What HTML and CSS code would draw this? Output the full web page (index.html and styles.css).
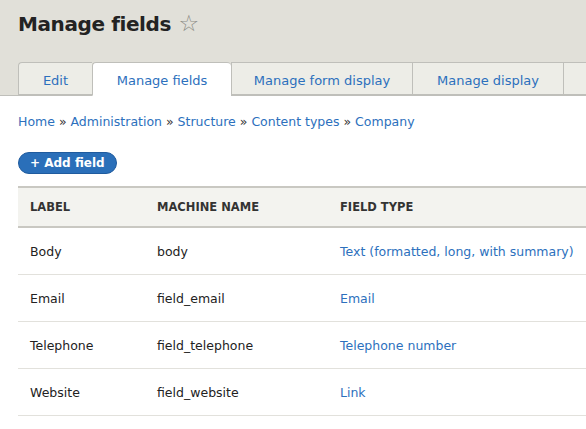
FILE: index.html
```html
<!DOCTYPE html>
<html lang="en">
<head>
  <meta charset="UTF-8" />
  <title>Manage fields</title>
  <link rel="stylesheet" href="styles.css">
</head>
<body>
  <div class="header">
    <h1>Manage fields <span class="star">&#9734;</span></h1>
    <div class="tabs">
      <a class="tab tab-edit">Edit</a>
      <a class="tab tab-fields active">Manage fields</a>
      <a class="tab tab-form">Manage form display</a>
      <a class="tab tab-display">Manage display</a>
      <a class="tab tab-more"></a>
    </div>
  </div>
  <div class="content">
    <div class="breadcrumb">
      <a>Home</a> » <a>Administration</a> » <a>Structure</a> » <a>Content types</a> » <a>Company</a>
    </div>
    <a class="button">+ Add field</a>
    <table class="fields">
      <thead>
        <tr><th class="c-label">Label</th><th class="c-machine">Machine name</th><th>Field type</th></tr>
      </thead>
      <tbody>
        <tr><td>Body</td><td>body</td><td><a>Text (formatted, long, with summary)</a></td></tr>
        <tr><td>Email</td><td>field_email</td><td><a>Email</a></td></tr>
        <tr><td>Telephone</td><td>field_telephone</td><td><a>Telephone number</a></td></tr>
        <tr><td>Website</td><td>field_website</td><td><a>Link</a></td></tr>
      </tbody>
    </table>
  </div>
</body>
</html>
```
FILE: styles.css
```css
html, body {
  margin: 0; padding: 0;
  overflow: hidden;
  font-family: 'DejaVu Sans', sans-serif;
  color: #222;
  background: white;
}
a { color: #2c70bd; text-decoration: none; }
.header {
  background: #e1e0d9;
  padding: 8px 0 0 18px;
  border-bottom: 1px solid #bfbfba;
}
h1 {
  margin: 0 0 23px 0;
  font-size: 20px;
  font-weight: bold;
  color: #232323;
  letter-spacing: -0.4px;
  line-height: 30px;
}
.star {
  font-weight: normal;
  color: #8d8d87;
  font-size: 23px;
  margin-left: 1px;
}
.tabs {
  display: flex;
  margin-bottom: -1px;
}
.tab {
  box-sizing: border-box;
  height: 33px;
  line-height: 32px;
  padding-top: 2px;
  text-align: center;
  font-size: 13px;
  background: #ededE7;
  border: 1px solid #bfbfba;
  border-right: none;
  flex-shrink: 0;
}
.tab:first-child { border-top-left-radius: 4px; }
.tab-edit { width: 74px; }
.tab-fields { width: 139px; }
.tab-form { width: 181px; }
.tab-display { width: 151px; }
.tab-more { width: 60px; }
.tab.active {
  background: white;
  border-bottom-color: white;
  border-top-left-radius: 4px;
  border-top-right-radius: 4px;
  height: 34px;
}
.content {
  padding: 16px 0 0 18px;
}
.breadcrumb {
  font-size: 12.5px;
  line-height: 20px;
  color: #333;
}
.button {
  display: inline-block;
  margin-top: 20px;
  background: #2a6fb9;
  border: 1px solid #1f5b9e;
  border-radius: 11px;
  color: white;
  font-weight: bold;
  font-size: 12px;
  line-height: 20px;
  padding: 0 11px 0 11px;
}
.fields {
  margin-top: 12px;
  border-collapse: collapse;
  width: 600px;
}
.fields th {
  text-align: left;
  text-transform: uppercase;
  font-size: 11.5px;
  font-weight: bold;
  color: #333;
  background: #f3f3ef;
  border-top: 2px solid #c9c8c2;
  border-bottom: 2px solid #c9c8c2;
  height: 38px;
  padding: 0 12px;
}
.fields td {
  font-size: 12.5px;
  height: 46px;
  padding: 0 12px;
  border-bottom: 1px solid #e2e1dc;
}
.c-label { width: 103px; }
.c-machine { width: 159px; }
```
